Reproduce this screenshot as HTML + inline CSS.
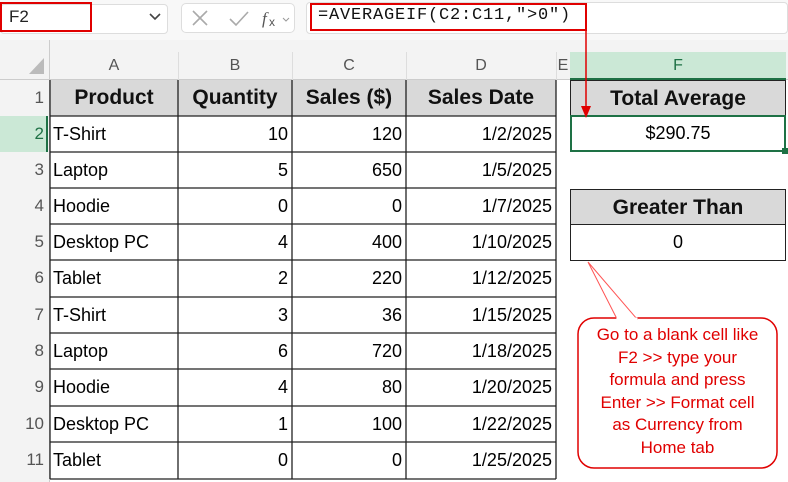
<!DOCTYPE html>
<html><head><style>
*{margin:0;padding:0;box-sizing:border-box}
body{width:788px;height:482px;overflow:hidden;background:#fff;font-family:"Liberation Sans",Arial,sans-serif;position:relative}
.a{position:absolute}
.t{position:absolute;font-size:18px;color:#000;line-height:36px;white-space:nowrap}
.h{position:absolute;background:#d9d9d9;font-weight:bold;font-size:21px;text-align:center;line-height:35px;color:#111}
.rn{position:absolute;left:0;width:44px;text-align:right;font-size:17px;color:#555;line-height:36px}
.cl{position:absolute;top:52px;height:28px;line-height:28px;text-align:center;font-size:16px;color:#555}
</style></head><body>
<!-- toolbar -->
<div class="a" style="left:0;top:0;width:788px;height:40px;background:#f8f8f8"></div>
<div class="a" style="left:0;top:4px;width:168px;height:30px;background:#fff;border:1px solid #ddd;border-radius:4px"></div>
<div class="a" style="left:0;top:2px;width:92px;height:30px;border:2px solid #e00000"></div>
<div class="a" style="left:9px;top:7px;font-size:17px;color:#222">F2</div>
<svg class="a" style="left:148px;top:12px" width="14" height="10"><path d="M2 2 L7 7 L12 2" stroke="#444" stroke-width="1.6" fill="none"/></svg>
<div class="a" style="left:181px;top:3px;width:114px;height:30px;background:#fff;border:1px solid #ddd;border-radius:5px"></div>
<svg class="a" style="left:190px;top:8px" width="110" height="22"><path d="M3 3 L17 17 M17 3 L3 17" stroke="#aaa" stroke-width="1.6"/><path d="M40 11 L46 17 L58 4" stroke="#aaa" stroke-width="1.6" fill="none"/><text x="72" y="16" font-family="Liberation Serif" font-style="italic" font-size="17" fill="#555">f</text><text x="79" y="18" font-family="Liberation Sans" font-size="12" fill="#555">x</text><path d="M93 10 L96 13 L99 10" stroke="#999" fill="none"/></svg>
<div class="a" style="left:306px;top:2px;width:482px;height:32px;background:#fff;border:1px solid #ddd;border-radius:4px"></div>
<div class="a" style="left:310px;top:3px;width:277px;height:28px;border:2px solid #e00000"></div>
<div class="a" style="left:318px;top:6px;font-family:'Liberation Mono',monospace;font-size:17px;color:#111;letter-spacing:0.8px">=AVERAGEIF(C2:C11,"&gt;0")</div>
<!-- column header -->
<div class="a" style="left:0;top:40px;width:788px;height:40px;background:#f3f3f3"></div>
<div class="a" style="left:0;top:80px;width:50px;height:402px;background:#f3f3f3"></div>
<div class="a" style="left:49px;top:40px;width:1px;height:442px;background:#ccc"></div>
<svg class="a" style="left:28px;top:56px" width="18" height="20"><path d="M16 2 L16 18 L1 18 Z" fill="#bbb"/></svg>
<div class="a" style="left:0;top:79px;width:788px;height:1px;background:#ccc"></div>
<div class="a" style="left:570px;top:52px;width:216px;height:28px;background:#cbe8d6;border-bottom:2px solid #1e7145"></div>
<div class="cl" style="left:50px;width:128px">A</div>
<div class="cl" style="left:178px;width:114px">B</div>
<div class="cl" style="left:292px;width:114px">C</div>
<div class="cl" style="left:406px;width:150px">D</div>
<div class="cl" style="left:556px;width:14px">E</div>
<div class="cl" style="left:570px;width:216px;color:#1e7145">F</div>
<div class="a" style="left:178px;top:52px;width:1px;height:28px;background:#ddd"></div>
<div class="a" style="left:292px;top:52px;width:1px;height:28px;background:#ddd"></div>
<div class="a" style="left:406px;top:52px;width:1px;height:28px;background:#ddd"></div>
<div class="a" style="left:556px;top:52px;width:1px;height:28px;background:#ddd"></div>
<!-- row numbers -->
<div class="a" style="left:0;top:116px;width:48px;height:36px;background:#cbe8d6;border-right:2px solid #1e7145"></div>
<div class="rn" style="top:80px">1</div>
<div class="rn" style="top:116px;color:#1e7145">2</div>
<div class="rn" style="top:152px">3</div>
<div class="rn" style="top:188px">4</div>
<div class="rn" style="top:224px">5</div>
<div class="rn" style="top:260px">6</div>
<div class="rn" style="top:297px">7</div>
<div class="rn" style="top:333px">8</div>
<div class="rn" style="top:369px">9</div>
<div class="rn" style="top:406px">10</div>
<div class="rn" style="top:442px">11</div>
<!-- table -->
<div class="h" style="left:50px;top:80px;width:128px;height:36px">Product</div>
<div class="h" style="left:178px;top:80px;width:114px;height:36px">Quantity</div>
<div class="h" style="left:292px;top:80px;width:114px;height:36px">Sales ($)</div>
<div class="h" style="left:406px;top:80px;width:150px;height:36px">Sales Date</div>
<svg class="a" style="left:0;top:0" width="788" height="482">
<g stroke="#222" stroke-width="1.3">
<line x1="50" y1="80" x2="50" y2="479"/><line x1="178" y1="80" x2="178" y2="479"/><line x1="292" y1="80" x2="292" y2="479"/><line x1="406" y1="80" x2="406" y2="479"/><line x1="556" y1="80" x2="556" y2="479"/>
<line x1="50" y1="116" x2="556" y2="116"/><line x1="50" y1="152" x2="556" y2="152"/><line x1="50" y1="188" x2="556" y2="188"/><line x1="50" y1="224" x2="556" y2="224"/><line x1="50" y1="260" x2="556" y2="260"/><line x1="50" y1="297" x2="556" y2="297"/><line x1="50" y1="333" x2="556" y2="333"/><line x1="50" y1="369" x2="556" y2="369"/><line x1="50" y1="406" x2="556" y2="406"/><line x1="50" y1="442" x2="556" y2="442"/><line x1="50" y1="479" x2="556" y2="479"/>
</g>
</svg>
<div class="t" style="left:53px;top:116px">T-Shirt</div><div class="t" style="left:178px;width:110px;text-align:right;top:116px">10</div><div class="t" style="left:292px;width:110px;text-align:right;top:116px">120</div><div class="t" style="left:406px;width:146px;text-align:right;top:116px">1/2/2025</div>
<div class="t" style="left:53px;top:152px">Laptop</div><div class="t" style="left:178px;width:110px;text-align:right;top:152px">5</div><div class="t" style="left:292px;width:110px;text-align:right;top:152px">650</div><div class="t" style="left:406px;width:146px;text-align:right;top:152px">1/5/2025</div>
<div class="t" style="left:53px;top:188px">Hoodie</div><div class="t" style="left:178px;width:110px;text-align:right;top:188px">0</div><div class="t" style="left:292px;width:110px;text-align:right;top:188px">0</div><div class="t" style="left:406px;width:146px;text-align:right;top:188px">1/7/2025</div>
<div class="t" style="left:53px;top:224px">Desktop PC</div><div class="t" style="left:178px;width:110px;text-align:right;top:224px">4</div><div class="t" style="left:292px;width:110px;text-align:right;top:224px">400</div><div class="t" style="left:406px;width:146px;text-align:right;top:224px">1/10/2025</div>
<div class="t" style="left:53px;top:260px">Tablet</div><div class="t" style="left:178px;width:110px;text-align:right;top:260px">2</div><div class="t" style="left:292px;width:110px;text-align:right;top:260px">220</div><div class="t" style="left:406px;width:146px;text-align:right;top:260px">1/12/2025</div>
<div class="t" style="left:53px;top:297px">T-Shirt</div><div class="t" style="left:178px;width:110px;text-align:right;top:297px">3</div><div class="t" style="left:292px;width:110px;text-align:right;top:297px">36</div><div class="t" style="left:406px;width:146px;text-align:right;top:297px">1/15/2025</div>
<div class="t" style="left:53px;top:333px">Laptop</div><div class="t" style="left:178px;width:110px;text-align:right;top:333px">6</div><div class="t" style="left:292px;width:110px;text-align:right;top:333px">720</div><div class="t" style="left:406px;width:146px;text-align:right;top:333px">1/18/2025</div>
<div class="t" style="left:53px;top:369px">Hoodie</div><div class="t" style="left:178px;width:110px;text-align:right;top:369px">4</div><div class="t" style="left:292px;width:110px;text-align:right;top:369px">80</div><div class="t" style="left:406px;width:146px;text-align:right;top:369px">1/20/2025</div>
<div class="t" style="left:53px;top:406px">Desktop PC</div><div class="t" style="left:178px;width:110px;text-align:right;top:406px">1</div><div class="t" style="left:292px;width:110px;text-align:right;top:406px">100</div><div class="t" style="left:406px;width:146px;text-align:right;top:406px">1/22/2025</div>
<div class="t" style="left:53px;top:442px">Tablet</div><div class="t" style="left:178px;width:110px;text-align:right;top:442px">0</div><div class="t" style="left:292px;width:110px;text-align:right;top:442px">0</div><div class="t" style="left:406px;width:146px;text-align:right;top:442px">1/25/2025</div>
<!-- F boxes -->
<div class="h" style="left:570px;top:80px;width:216px;height:36px;border:1px solid #222;border-bottom:none">Total Average</div>
<div class="a" style="left:570px;top:115px;width:216px;height:37px;border:2px solid #1e7145;text-align:center;font-size:18px;line-height:33px">$290.75</div>
<div class="a" style="left:782px;top:148px;width:6px;height:6px;background:#1e7145"></div>
<div class="h" style="left:570px;top:189px;width:216px;height:36px;border:1px solid #222">Greater Than</div>
<div class="a" style="left:570px;top:224px;width:216px;height:37px;border:1px solid #222;text-align:center;font-size:18px;line-height:35px">0</div>
<!-- arrows & callout -->
<svg class="a" style="left:0;top:0" width="788" height="482">
<path d="M586 31 L586 108" stroke="#e00000" stroke-width="1.5"/>
<path d="M581 106 L591 106 L586 118 Z" fill="#e00000"/>
<rect x="578" y="318" width="199" height="150" rx="16" fill="#fff" stroke="#e00000" stroke-width="1.5"/>
<path d="M617 319 L588 262 L637 319 Z" stroke="#f55" stroke-width="1" fill="#fff"/>
<path d="M616.5 318.8 L637.5 318.8" stroke="#fff" stroke-width="2.5"/>
</svg>
<div class="a" style="left:578px;top:324px;width:199px;text-align:center;color:#e00000;font-size:17px;line-height:22.5px;white-space:nowrap">Go to a blank cell like<br>F2 &gt;&gt; type your<br>formula and press<br>Enter &gt;&gt; Format cell<br>as Currency from<br>Home tab</div>
</body></html>
